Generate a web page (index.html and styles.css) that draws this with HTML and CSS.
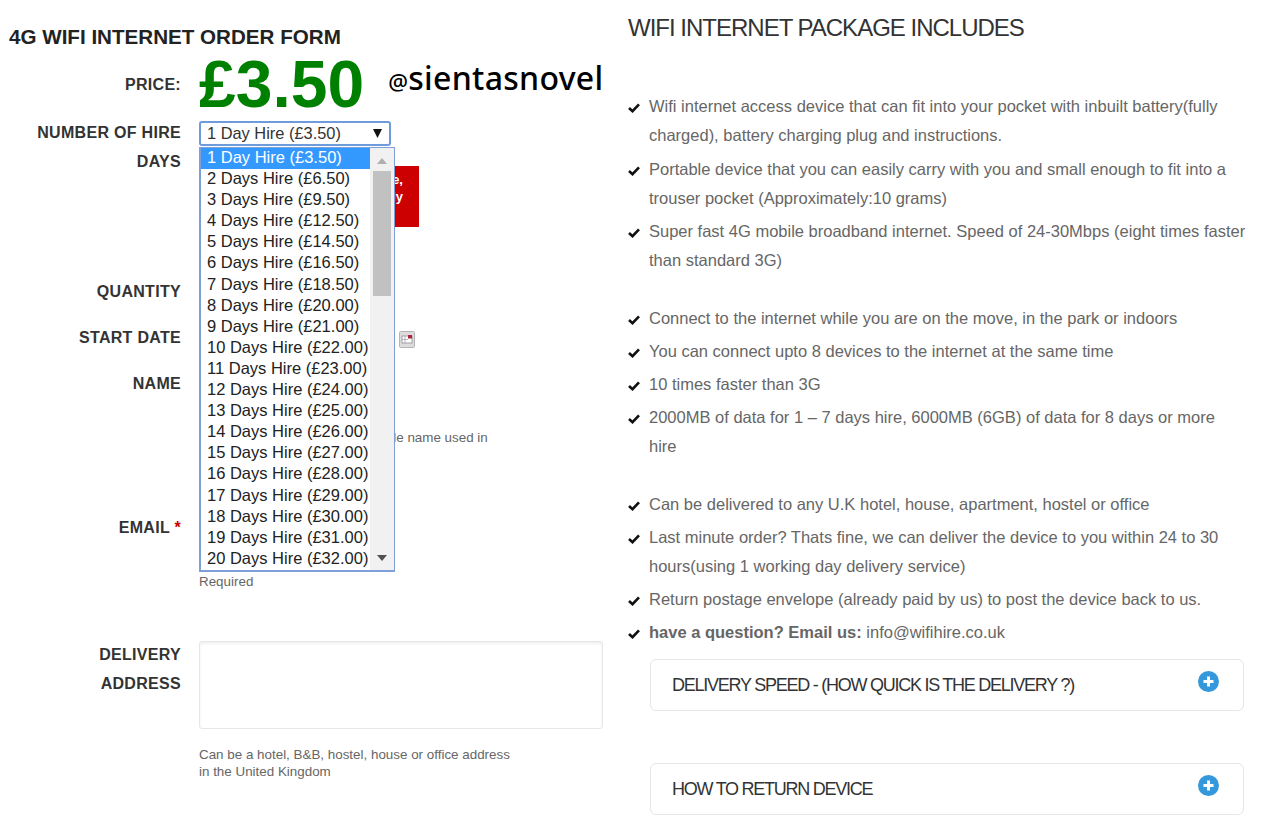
FILE: index.html
```html
<!DOCTYPE html>
<html lang="en">
<head>
  <meta charset="UTF-8" />
  <meta name="viewport" content="width=device-width, initial-scale=1.0">
  <title>4G WiFi Internet Order Form</title>
  <link rel="stylesheet" href="styles.css">
</head>
<body>

  <div class="page">
    <form class="order-form">
      <h2 class="form-title">4G WIFI INTERNET ORDER FORM</h2>

      <div class="row row-price">
        <label class="row-label">PRICE:</label>
        <div class="price-line">
          <span class="price">£3.50</span>
          <span class="handle"><span class="handle-at">@</span>sientasnovel</span>
        </div>
      </div>

      <div class="row row-hire">
        <label class="row-label">NUMBER OF HIRE DAYS</label>
        <div class="control control-hire">
          <div class="select-box">
            <span>1 Day Hire (£3.50)</span>
            <svg class="select-arrow" width="9" height="9" viewBox="0 0 9 9"><path d="M0 0h9L4.5 9z" fill="#111"/></svg>
          </div>
          <div class="promo">
            Choose your period of hire,<br>
            pay for what you use daily
          </div>

          <div class="listbox">
            <ul class="options">
              <li class="selected">1 Day Hire (£3.50)</li>
              <li>2 Days Hire (£6.50)</li>
              <li>3 Days Hire (£9.50)</li>
              <li>4 Days Hire (£12.50)</li>
              <li>5 Days Hire (£14.50)</li>
              <li>6 Days Hire (£16.50)</li>
              <li>7 Days Hire (£18.50)</li>
              <li>8 Days Hire (£20.00)</li>
              <li>9 Days Hire (£21.00)</li>
              <li>10 Days Hire (£22.00)</li>
              <li>11 Days Hire (£23.00)</li>
              <li>12 Days Hire (£24.00)</li>
              <li>13 Days Hire (£25.00)</li>
              <li>14 Days Hire (£26.00)</li>
              <li>15 Days Hire (£27.00)</li>
              <li>16 Days Hire (£28.00)</li>
              <li>17 Days Hire (£29.00)</li>
              <li>18 Days Hire (£30.00)</li>
              <li>19 Days Hire (£31.00)</li>
              <li>20 Days Hire (£32.00)</li>
            </ul>
            <div class="scrollbar">
              <svg class="scroll-arrow" width="10" height="6" viewBox="0 0 10 6"><path d="M0 6L5 0 10 6z" fill="#b0b0b0"/></svg>
              <div class="scroll-thumb"></div>
              <svg class="scroll-arrow scroll-arrow-down" width="10" height="6" viewBox="0 0 10 6"><path d="M0 0L5 6 10 0z" fill="#505050"/></svg>
            </div>
          </div>
        </div>
      </div>

      <div class="row">
        <label class="row-label">QUANTITY</label>
        <div class="control"><input class="text-input" type="text"></div>
      </div>

      <div class="row">
        <label class="row-label">START DATE</label>
        <div class="control date-control">
          <input class="text-input" type="text">
          <svg class="calendar" width="16" height="17" viewBox="0 0 16 17">
            <rect x="0.5" y="0.5" width="15" height="16" rx="1" fill="#dcdcdc" stroke="#b5b5b5"/>
            <rect x="3" y="5" width="10" height="7" fill="#fff" stroke="#8f8f9c" stroke-width="0.8"/>
            <rect x="9" y="4" width="4" height="3.5" fill="#b4233c"/>
            <path d="M3 8.5h6M6 5v7" stroke="#a5a5b0" stroke-width="0.8"/>
          </svg>
        </div>
      </div>

      <div class="row row-name">
        <label class="row-label">NAME</label>
        <div class="control">
          <input class="text-input" type="text">
          <p class="hint hint-name">Enter your first name, or the single name used in</p>
        </div>
      </div>

      <div class="row row-email">
        <label class="row-label">EMAIL <span class="required">*</span></label>
        <div class="control">
          <input class="text-input" type="text">
          <p class="hint hint-required">Required</p>
        </div>
      </div>

      <div class="row">
        <label class="row-label">DELIVERY<br>ADDRESS</label>
        <div class="control">
          <textarea class="address"></textarea>
          <p class="hint hint-address">Can be a hotel, B&amp;B, hostel, house or office address<br>in the United Kingdom</p>
        </div>
      </div>
    </form>

    <section class="package">
      <h2 class="package-title">WIFI INTERNET PACKAGE INCLUDES</h2>

      <ul class="features features-intro">
        <li><svg class="tick" width="12" height="10" viewBox="0 0 12 10"><path d="M1 5l3.5 3.2L11 1.3" fill="none" stroke="#111" stroke-width="2.6"/></svg><span>Wifi internet access device that can fit into your pocket with inbuilt battery(fully charged), battery charging plug and instructions.</span></li>
        <li><svg class="tick" width="12" height="10" viewBox="0 0 12 10"><path d="M1 5l3.5 3.2L11 1.3" fill="none" stroke="#111" stroke-width="2.6"/></svg><span>Portable device that you can easily carry with you and small enough to fit into a trouser pocket (Approximately:10 grams)</span></li>
        <li><svg class="tick" width="12" height="10" viewBox="0 0 12 10"><path d="M1 5l3.5 3.2L11 1.3" fill="none" stroke="#111" stroke-width="2.6"/></svg><span>Super fast 4G mobile broadband internet. Speed of 24-30Mbps (eight times faster than standard 3G)</span></li>
      </ul>

      <ul class="features">
        <li><svg class="tick" width="12" height="10" viewBox="0 0 12 10"><path d="M1 5l3.5 3.2L11 1.3" fill="none" stroke="#111" stroke-width="2.6"/></svg><span>Connect to the internet while you are on the move, in the park or indoors</span></li>
        <li><svg class="tick" width="12" height="10" viewBox="0 0 12 10"><path d="M1 5l3.5 3.2L11 1.3" fill="none" stroke="#111" stroke-width="2.6"/></svg><span>You can connect upto 8 devices to the internet at the same time</span></li>
        <li><svg class="tick" width="12" height="10" viewBox="0 0 12 10"><path d="M1 5l3.5 3.2L11 1.3" fill="none" stroke="#111" stroke-width="2.6"/></svg><span>10 times faster than 3G</span></li>
        <li><svg class="tick" width="12" height="10" viewBox="0 0 12 10"><path d="M1 5l3.5 3.2L11 1.3" fill="none" stroke="#111" stroke-width="2.6"/></svg><span>2000MB of data for 1 – 7 days hire, 6000MB (6GB) of data for 8 days or more hire</span></li>
      </ul>

      <ul class="features">
        <li><svg class="tick" width="12" height="10" viewBox="0 0 12 10"><path d="M1 5l3.5 3.2L11 1.3" fill="none" stroke="#111" stroke-width="2.6"/></svg><span>Can be delivered to any U.K hotel, house, apartment, hostel or office</span></li>
        <li><svg class="tick" width="12" height="10" viewBox="0 0 12 10"><path d="M1 5l3.5 3.2L11 1.3" fill="none" stroke="#111" stroke-width="2.6"/></svg><span>Last minute order? Thats fine, we can deliver the device to you within 24 to 30 hours(using 1 working day delivery service)</span></li>
        <li><svg class="tick" width="12" height="10" viewBox="0 0 12 10"><path d="M1 5l3.5 3.2L11 1.3" fill="none" stroke="#111" stroke-width="2.6"/></svg><span>Return postage envelope (already paid by us) to post the device back to us.</span></li>
        <li><svg class="tick" width="12" height="10" viewBox="0 0 12 10"><path d="M1 5l3.5 3.2L11 1.3" fill="none" stroke="#111" stroke-width="2.6"/></svg><span><b>have a question? Email us:</b> info@wifihire.co.uk</span></li>
      </ul>

      <div class="accordion">
        <div class="panel">
          <span class="panel-title">DELIVERY SPEED - (HOW QUICK IS THE DELIVERY ?)</span>
          <svg class="plus" width="21" height="21" viewBox="0 0 21 21"><circle cx="10.5" cy="10.5" r="10.5" fill="#3498db"/><path d="M10.5 5.5v10M5.5 10.5h10" stroke="#fff" stroke-width="3"/></svg>
        </div>
        <div class="panel">
          <span class="panel-title">HOW TO RETURN DEVICE</span>
          <svg class="plus" width="21" height="21" viewBox="0 0 21 21"><circle cx="10.5" cy="10.5" r="10.5" fill="#3498db"/><path d="M10.5 5.5v10M5.5 10.5h10" stroke="#fff" stroke-width="3"/></svg>
        </div>
      </div>
    </section>
  </div>

</body>
</html>
```

FILE: styles.css
```css
html, body {
  margin: 0;
  height: 815px;
  overflow: hidden;
  background: #fff;
}

body {
  font-family: "Liberation Sans", Arial, sans-serif;
  color: #333;
}

.page {
  display: flex;
}

/* left column */
.order-form {
  width: 619px;
  padding: 24px 0 0 9px;
  flex-shrink: 0;
}

.form-title {
  margin: 0 0 5px;
  font-size: 20.6px;
  line-height: 26px;
  font-weight: bold;
  color: #222;
}

.row {
  display: grid;
  grid-template-columns: 172px 404px;
  column-gap: 18px;
  margin-bottom: 17px;
}

.row-label {
  font-size: 16px;
  font-weight: bold;
  line-height: 29px;
  text-align: right;
  color: #333;
  letter-spacing: 0.3px;
}

.row-price {
  height: 58px;
  margin-bottom: 5px;
  align-items: center;
}

.price-line {
  display: flex;
  align-items: center;
  gap: 24px;
}

.price {
  font-size: 66px;
  font-weight: bold;
  line-height: 58px;
  color: #008000;
}

.handle {
  font-family: "Noto Sans", sans-serif;
  font-size: 32px;
  font-weight: 500;
  line-height: 40px;
  letter-spacing: 0.3px;
  color: #000;
  margin-top: -10px;
}

.handle-at {
  font-size: 22px;
}

.row-hire {
  height: 159px;
  margin-bottom: 0;
}

.control-hire {
  position: relative;
  padding-top: 3px;
}

.select-box {
  box-sizing: border-box;
  display: flex;
  align-items: center;
  justify-content: space-between;
  width: 192px;
  height: 25px;
  padding: 0 7px 0 6px;
  border: 2px solid #6d9bdc;
  border-radius: 3px;
  font-size: 16.4px;
  color: #333;
}

.promo {
  box-sizing: border-box;
  width: 220px;
  height: 61px;
  margin-top: 20px;
  padding: 5px 16px 0 0;
  background: #cc0000;
  color: #fff;
  font-size: 13px;
  font-weight: bold;
  line-height: 17px;
  text-align: right;
  white-space: nowrap;
}

.listbox {
  position: absolute;
  top: 29px;
  left: 0;
  z-index: 5;
  box-sizing: border-box;
  display: flex;
  width: 196px;
  height: 425px;
  border: 1px solid #7f9fd8;
  border-left-width: 2px;
  border-bottom-width: 2px;
  background: #fff;
}

.options {
  flex: 1;
  margin: 0;
  padding: 0;
  list-style: none;
  font-size: 16.5px;
  line-height: 19.1px;
  color: #222;
}

.options li {
  padding: 0 0 2px 6px;
}

.options .selected {
  background: #3399ff;
  color: #fff;
}

.scrollbar {
  display: flex;
  flex-direction: column;
  align-items: center;
  width: 24px;
  background: #f1f1f1;
}

.scroll-arrow {
  margin: 10px 0 7px;
  flex-shrink: 0;
}

.scroll-arrow-down {
  margin: auto 0 9px;
}

.scroll-thumb {
  width: 18px;
  height: 125px;
  background: #c1c1c1;
}

.text-input {
  box-sizing: border-box;
  display: block;
  width: 192px;
  height: 29px;
  border: 1px solid #e2e2e2;
  border-radius: 3px;
}

.date-control {
  display: flex;
  align-items: center;
  gap: 8px;
}

.calendar {
  flex-shrink: 0;
  margin-top: 3px;
}

.hint {
  margin: 0;
  font-size: 13.4px;
  line-height: 17px;
  color: #666;
}

.row-name {
  margin-bottom: 67px;
}

.hint-name {
  margin-top: 31px;
  white-space: nowrap;
}

.row-email {
  margin-bottom: 50px;
}

.hint-required {
  margin-top: 31px;
}

.required {
  color: #cc0000;
}

.address {
  box-sizing: border-box;
  display: block;
  width: 404px;
  height: 88px;
  margin: 1px 0 0;
  border: 1px solid #e6e6e6;
  border-radius: 3px;
  box-shadow: inset 0 2px 3px rgba(0, 0, 0, 0.06);
  resize: none;
}

.hint-address {
  margin-top: 17px;
}

/* right column */
.package {
  width: 618px;
  box-sizing: border-box;
}

.package-title {
  margin: 14px 0 50px;
  font-size: 24px;
  line-height: 28px;
  font-weight: normal;
  color: #333;
  letter-spacing: -1px;
}

.features {
  margin: 0 0 29px;
  padding: 0;
  list-style: none;
  font-size: 16.5px;
  line-height: 29px;
  color: #666;
}

.features li {
  display: flex;
  align-items: flex-start;
  gap: 9px;
  margin-bottom: 4px;
}

.features-intro li {
  margin-bottom: 4.5px;
}

.features .tick {
  flex-shrink: 0;
  margin-top: 11px;
}

.accordion {
  display: flex;
  flex-direction: column;
  gap: 52px;
  margin: -17px 0 0 22px;
  width: 594px;
}

.panel {
  box-sizing: border-box;
  display: flex;
  justify-content: space-between;
  height: 52px;
  flex-shrink: 0;
  padding: 11px 24px 0 21px;
  border: 1px solid #e6e6e6;
  border-radius: 6px;
}

.panel-title {
  font-size: 18px;
  line-height: 29px;
  color: #333;
  letter-spacing: -1.25px;
}

.plus {
  flex-shrink: 0;
}
```
